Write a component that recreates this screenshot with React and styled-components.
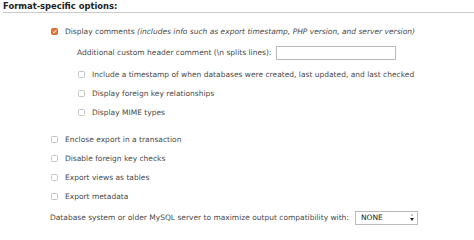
import React from "react";
import styled, { createGlobalStyle } from "styled-components";

const Global = createGlobalStyle`
  html, body { margin: 0; padding: 0; background: #fff; }
  body { font-family: "DejaVu Sans", sans-serif; }
`;

const Page = styled.div`
  padding: 0 0 0 3px;
  font-family: "DejaVu Sans", sans-serif;
  font-size: 7.5px;
  color: #4a4a4a;
`;

const Heading = styled.h3`
  margin: 0;
  height: 12px;
  line-height: 12px;
  font-size: 8.4px;
  font-weight: bold;
  color: #222;
  border-bottom: 1px solid #ccc;
`;

const List = styled.div`
  display: flex;
  flex-direction: column;
  padding-top: 9px;
`;

const Row = styled.div`
  display: flex;
  align-items: center;
  height: 19px;
  padding-left: ${(p) => p.$indent}px;
  margin-top: ${(p) => p.$gap || 0}px;
  white-space: nowrap;
`;

const Box = styled.span`
  box-sizing: border-box;
  width: 7px;
  height: 7px;
  border-radius: 1.5px;
  margin-right: 7px;
  flex: none;
  display: flex;
  align-items: center;
  justify-content: center;
  background: ${(p) => (p.$checked ? "#e2773d" : "#fff")};
  border: 1px solid ${(p) => (p.$checked ? "#d56a30" : "#c4c4c4")};
`;

const Em = styled.em`
  font-style: italic;
`;

const TextInput = styled.input`
  box-sizing: border-box;
  width: 120px;
  height: 14px;
  margin: 0 0 0 5px;
  padding: 0 2px;
  border: 1px solid #bbb;
  background: #fff;
  font: inherit;
`;

const Select = styled.div`
  box-sizing: border-box;
  width: 63px;
  height: 14px;
  margin-left: 6px;
  padding: 0 3px 0 5px;
  border: 1px solid #bbb;
  background: #fff;
  display: flex;
  align-items: center;
  justify-content: space-between;
  color: #222;
`;

function Check({ checked }) {
  return (
    <Box $checked={checked}>
      {checked && (
        <svg width="5" height="5" viewBox="0 0 10 10">
          <path d="M1.5 5.2 L4 7.6 L8.6 2.4" fill="none" stroke="#fff" strokeWidth="2" />
        </svg>
      )}
    </Box>
  );
}

function Option({ indent, gap, checked, children }) {
  return (
    <Row $indent={indent} $gap={gap}>
      <Check checked={checked} />
      <span>{children}</span>
    </Row>
  );
}

export default function App() {
  return (
    <>
      <Global />
      <Page>
        <Heading>Format-specific options:</Heading>
        <List>
          <Option indent={48} checked>
            Display comments <Em>(includes info such as export timestamp, PHP version, and server version)</Em>
          </Option>
          <Row $indent={74} $gap={2}>
            Additional custom header comment (\n splits lines):
            <TextInput type="text" />
          </Row>
          <Option indent={75} gap={3}>
            Include a timestamp of when databases were created, last updated, and last checked
          </Option>
          <Option indent={75}>Display foreign key relationships</Option>
          <Option indent={75}>Display MIME types</Option>
          <Option indent={48} gap={8}>Enclose export in a transaction</Option>
          <Option indent={48}>Disable foreign key checks</Option>
          <Option indent={48}>Export views as tables</Option>
          <Option indent={48}>Export metadata</Option>
          <Row $indent={47} $gap={2}>
            Database system or older MySQL server to maximize output compatibility with:
            <Select>
              <span>NONE</span>
              <svg width="4" height="8" viewBox="0 0 4 8">
                <rect x="1.5" y="0" width="1" height="2" fill="#888" />
                <path d="M0 4 L4 4 L2 7 Z" fill="#222" />
              </svg>
            </Select>
          </Row>
        </List>
      </Page>
    </>
  );
}
